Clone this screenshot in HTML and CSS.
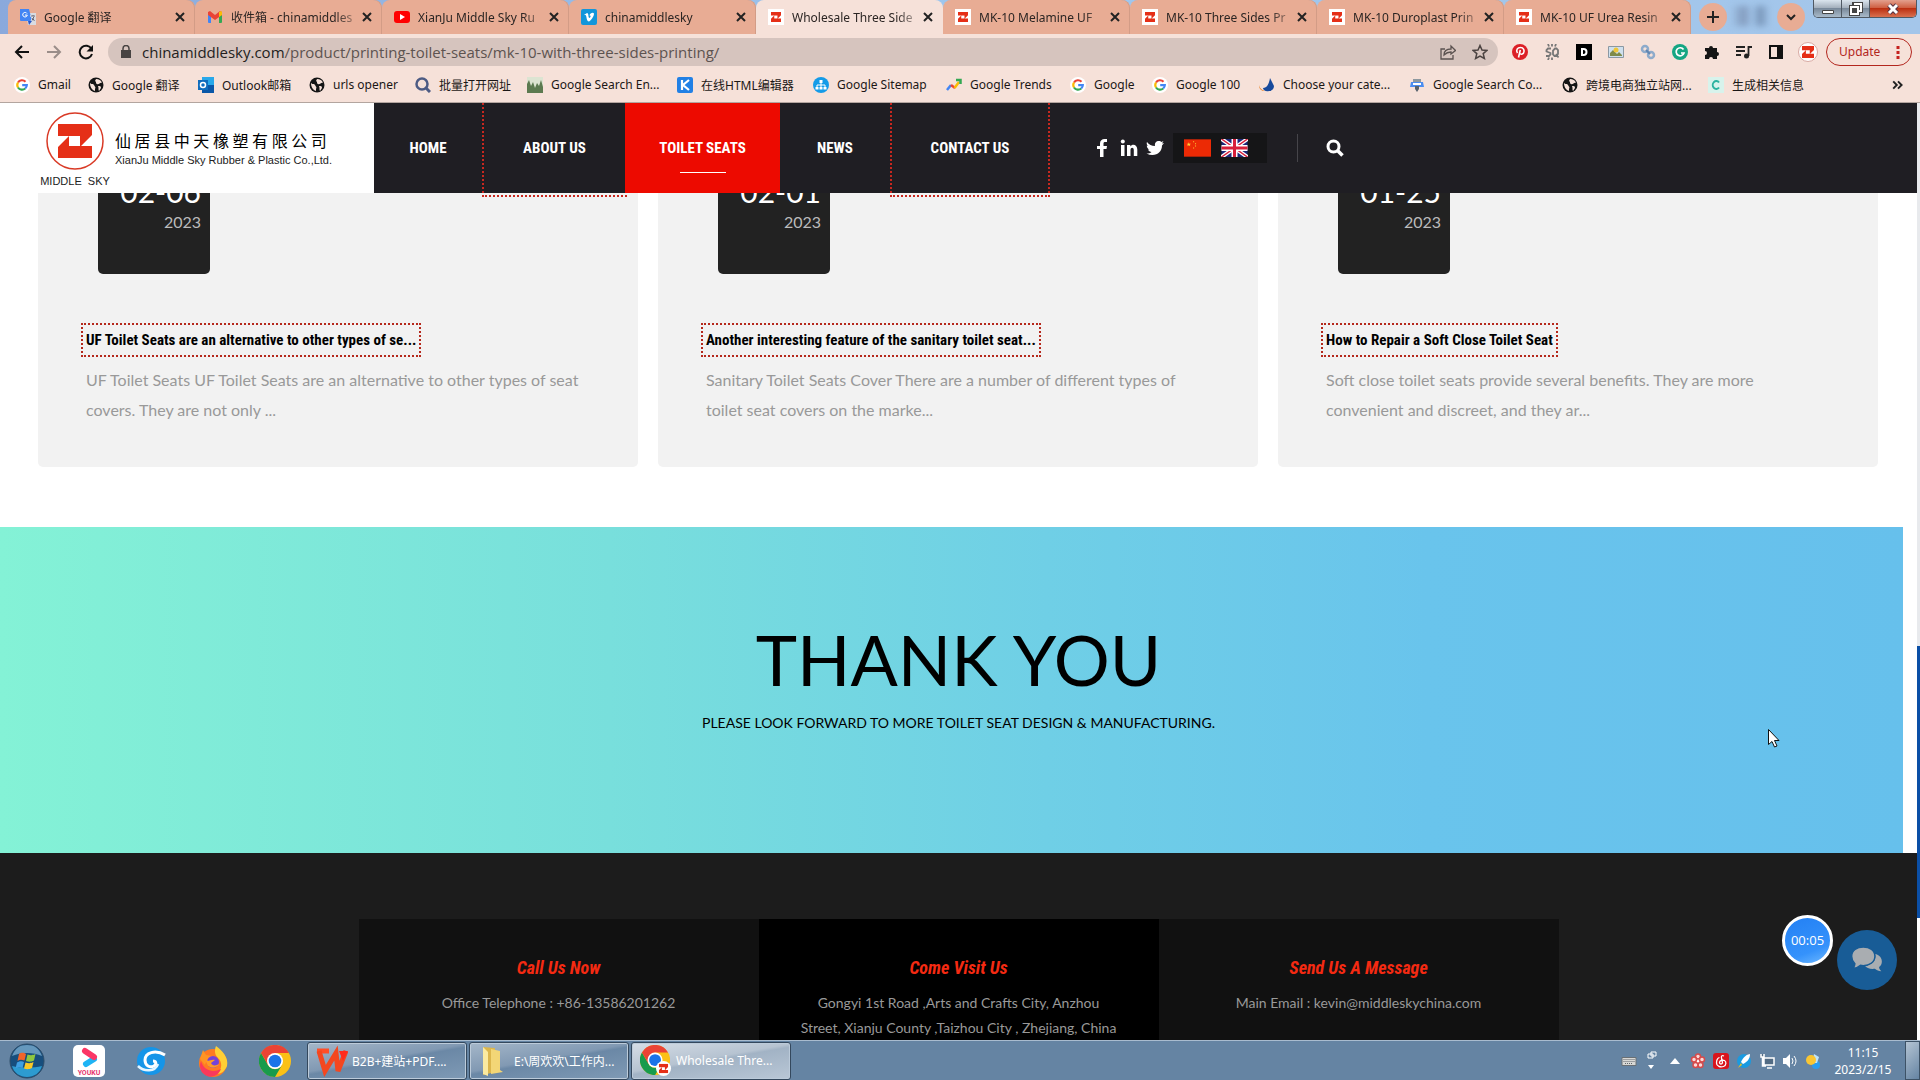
FILE: index.html
```html
<!DOCTYPE html>
<html lang="en">
<head>
    <meta charset="UTF-8">
    <meta name="viewport" content="width=device-width, initial-scale=1.0">
    <title>Wholesale Three Sides Printing</title>
    <link rel="stylesheet" href="styles.css">
</head>
<body>
    <!-- shared symbols -->
    <svg class="symbols" aria-hidden="true">
        <symbol id="z" viewBox="0 0 34 34"><path fill="#e52f17" d="M0 0h34v11L23 22h11v12H0V23l11-11H0z"/><path fill="#fff" d="M11 12h11v10H11z"/></symbol>
        <symbol id="zfav" viewBox="0 0 16 16"><path fill="#fff" d="M0 0h16v16H0z"/><use href="#z" x="3" y="3" width="10" height="10"/></symbol>
        <symbol id="close" viewBox="0 0 10 10"><path d="M1 1l8 8M9 1L1 9" stroke="#222" stroke-width="2"/></symbol>
        <symbol id="google" viewBox="0 0 16 16"><circle cx="8" cy="8" r="8" fill="#fff"/><g fill="none" stroke-width="2.2"><path stroke="#ea4335" d="M4 5.500A4.800 4.800 0 0 1 11.500 4.700"/><path stroke="#fbbc05" d="M4 5.500a4.800 4.800 0 0 0 0 5"/><path stroke="#34a853" d="M4 10.500a4.800 4.800 0 0 0 7.200 1"/><path stroke="#4285f4" d="M11.200 11.500A4.800 4.800 0 0 0 12.800 8.200H8.200"/></g></symbol>
        <symbol id="globe" viewBox="0 0 16 16"><circle cx="8" cy="8" r="7.500" fill="#151515"/><path fill="#f6e1d9" d="M2 6c2 2 3 0 4 2s2 2 1 4l0 2C4 13 2 10 2 6zM8 2c3 0 5 1 6 4-2-1-3 2-5 1S9 5 7 4zM10 9c2 0 3 0 3 2l-2 3c-1-1 0-3-1-5z"/></symbol>
        <symbol id="chrome" viewBox="0 0 32 32"><circle cx="16" cy="16" r="16" fill="#fbc116"/><path fill="#ea4335" d="M2.100 8A16 16 0 0 1 29.900 8H16a8 8 0 0 0-7 4z"/><path fill="#189b4c" d="M2.100 8A16 16 0 0 0 16 32l7-12a8 8 0 0 1-14 0z"/><path fill="#ea4335" d="M2.100 8l7 12L16 8z"/><circle cx="16" cy="16" r="8" fill="#fff"/><circle cx="16" cy="16" r="6.300" fill="#1a73e8"/></symbol>
    </svg>

    <!-- browser window -->
    <header class="browser">
        <div class="tab-strip">
            <div class="tab">
                <svg class="fav" viewBox="0 0 16 16"><path fill="#d9dce2" d="M6 4h10v12H8z"/><path fill="#4285f4" d="M0 0h9l3 12H1a1 1 0 0 1-1-1z"/><path fill="#2a56c6" d="M8 12h4l-3 4z"/><path d="M7 4.500a2.300 2.300 0 1 0 .3 1.600H5M10 7h5M12.500 6v1M14 7l-3 5M12 9l3 3" stroke="#fff" fill="none"/><path d="M11 7h4M13 6v1M14 7.500l-2 4M12.500 9l2 3" stroke="#667" fill="none"/></svg>
                <span class="tab-title">Google 翻译</span><button class="tab-close" aria-label="Close"><svg><use href="#close"/></svg></button>
            </div>
            <div class="tab">
                <svg class="fav" viewBox="0 0 16 16"><path fill="#4285f4" d="M1 4h3v10H2a1 1 0 0 1-1-1z"/><path fill="#34a853" d="M12 4h3v9a1 1 0 0 1-1 1h-2z"/><path fill="#ea4335" d="M1 3l2-1 5 4 5-4 2 1v3l-7 5-7-5z"/><path fill="#fbbc05" d="M12 3l2-1 1 1v3l-3 2z"/></svg>
                <span class="tab-title">收件箱 - chinamiddles</span><button class="tab-close" aria-label="Close"><svg><use href="#close"/></svg></button>
            </div>
            <div class="tab">
                <svg class="fav" viewBox="0 0 16 16"><rect y="2" width="16" height="12" rx="3" fill="#f00"/><path fill="#fff" d="M6 5l5 3-5 3z"/></svg>
                <span class="tab-title">XianJu Middle Sky Ru</span><button class="tab-close" aria-label="Close"><svg><use href="#close"/></svg></button>
            </div>
            <div class="tab">
                <svg class="fav" viewBox="0 0 16 16"><rect width="16" height="16" rx="2" fill="#1296db"/><path fill="#fff" d="M3 6l3-2c2 0 1 5 2.500 5C10 8 10 6 8.500 6.500 9 4 12 3 13 4.500c0 3-3 7-5 8-3 0-2-6-3.500-6.500z"/></svg>
                <span class="tab-title">chinamiddlesky</span><button class="tab-close" aria-label="Close"><svg><use href="#close"/></svg></button>
            </div>
            <div class="tab active">
                <svg class="fav"><use href="#zfav"/></svg>
                <span class="tab-title">Wholesale Three Side</span><button class="tab-close" aria-label="Close"><svg><use href="#close"/></svg></button>
            </div>
            <div class="tab">
                <svg class="fav"><use href="#zfav"/></svg>
                <span class="tab-title">MK-10 Melamine UF</span><button class="tab-close" aria-label="Close"><svg><use href="#close"/></svg></button>
            </div>
            <div class="tab">
                <svg class="fav"><use href="#zfav"/></svg>
                <span class="tab-title">MK-10 Three Sides Pr</span><button class="tab-close" aria-label="Close"><svg><use href="#close"/></svg></button>
            </div>
            <div class="tab">
                <svg class="fav"><use href="#zfav"/></svg>
                <span class="tab-title">MK-10 Duroplast Prin</span><button class="tab-close" aria-label="Close"><svg><use href="#close"/></svg></button>
            </div>
            <div class="tab">
                <svg class="fav"><use href="#zfav"/></svg>
                <span class="tab-title">MK-10 UF Urea Resin</span><button class="tab-close" aria-label="Close"><svg><use href="#close"/></svg></button>
            </div>
            <button class="round-button" aria-label="New tab"><svg viewBox="0 0 14 14"><path d="M7 1v12M1 7h12" stroke="#222" stroke-width="2"/></svg></button>
            <span class="glass-blur"></span>
            <button class="round-button" aria-label="Search tabs"><svg viewBox="0 0 14 14"><path d="M3 5l4 4 4-4" fill="none" stroke="#222" stroke-width="2"/></svg></button>
            <div class="window-controls">
                <button aria-label="Minimize"><svg viewBox="0 0 16 16"><path fill="#fff" stroke="#444" d="M2.500 9.500h11v3h-11z"/></svg></button>
                <button aria-label="Restore"><svg viewBox="0 0 16 16"><path fill="none" stroke="#444" stroke-width="4" d="M6 3h7v7H6zM3 6h7v7H3z"/><path fill="none" stroke="#fff" stroke-width="2" d="M6 3h7v7h-3M3 6h7v7H3z"/></svg></button>
                <button class="close-window" aria-label="Close window"><svg viewBox="0 0 16 16"><path d="M4 4l8 8M12 4l-8 8" stroke="#534" stroke-width="5"/><path d="M4 4l8 8M12 4l-8 8" stroke="#fff" stroke-width="3"/></svg></button>
            </div>
        </div>

        <div class="toolbar">
            <button class="tool" aria-label="Back"><svg viewBox="0 0 16 16"><path d="M15 8H2M8 2L2 8l6 6" fill="none" stroke="#111" stroke-width="2"/></svg></button>
            <button class="tool" aria-label="Forward"><svg viewBox="0 0 16 16"><path d="M1 8h13M8 2l6 6-6 6" fill="none" stroke="#9a8d89" stroke-width="2"/></svg></button>
            <button class="tool" aria-label="Reload"><svg viewBox="0 0 16 16"><path d="M13.500 5A6.300 6.300 0 1 0 14 10" fill="none" stroke="#111" stroke-width="2"/><path d="M15 1v6.500H8.500z" fill="#111"/></svg></button>
            <div class="omnibox">
                <svg class="lock" viewBox="0 0 12 14"><path fill="#484443" d="M1 5h10v8H1z"/><path d="M3 6V3.500a3 3 0 0 1 6 0V6" fill="none" stroke="#484443" stroke-width="1.500"/></svg>
                <div class="url"><b>chinamiddlesky.com</b>/product/printing-toilet-seats/mk-10-with-three-sides-printing/</div>
                <button class="tool" aria-label="Share"><svg viewBox="0 0 16 16"><path d="M5 5H1v10h12v-4M4 11c0-4 3-6 7-6V2l4.500 4.500L11 10V8C8 8 6 9 4 11z" fill="none" stroke="#5b5250" stroke-width="1.300"/></svg></button>
                <button class="tool" aria-label="Bookmark"><svg viewBox="0 0 16 16"><path d="M8 1.500l2 4.500 5 .4-3.800 3.200 1.200 4.900L8 12l-4.400 2.500 1.200-4.900L1 6.400 6 6z" fill="none" stroke="#4b4341" stroke-width="1.500"/></svg></button>
            </div>
            <div class="extensions">
                <button class="tool" aria-label="Pinterest"><svg viewBox="0 0 16 16"><circle cx="8" cy="8" r="8" fill="#dc1f26"/><path d="M5.500 9C3.500 6 5.500 3.500 8.500 3.500s4.500 3 3 5.500c-1 1.500-3 1.500-3.500.5M8.300 6L6.500 13.500" fill="none" stroke="#fff" stroke-width="1.600"/></svg></button>
                <button class="tool" aria-label="SEOquake"><svg viewBox="0 0 16 16"><path d="M7 4.500H4L2.500 6v1.500L6.500 9v1.500L5 12H2M12.500 4.500H11L9 6.500v4L10.500 12H12l2-2V6zM12 10l2.500 3.500M4 0l1 2.500M8 0v2.500M12 0l-1 2.500M4 16l1-2.500M8 16v-2.500" fill="none" stroke="#777" stroke-width="1.800"/></svg></button>
                <button class="tool" aria-label="Detailed"><svg viewBox="0 0 16 16"><path d="M0 0h16v16H0z"/><path d="M6 5v6h1.500c4 0 4-6 0-6z" fill="none" stroke="#fff" stroke-width="2"/></svg></button>
                <button class="tool" aria-label="Images"><svg viewBox="0 0 16 16"><path d="M.5 2.500h15v11H.5z" fill="#cfe0ee" stroke="#8b98a3"/><path d="M2 12V9l3-3 4 4 2-2 3 3v1z" fill="#7e8b4b"/><circle cx="8" cy="6" r="2.500" fill="#efc63a"/></svg></button>
                <button class="tool" aria-label="Links"><svg viewBox="0 0 16 16"><g fill="none" stroke="#8eabcb" stroke-width="2.500"><circle cx="5" cy="5" r="3"/><circle cx="11" cy="11" r="3"/></g><path d="M6 6l4 4" stroke="#5f84b0" stroke-width="2"/></svg></button>
                <button class="tool" aria-label="Grammarly"><svg viewBox="0 0 16 16"><circle cx="8" cy="8" r="8" fill="#15a683"/><path d="M11.500 5.500A4 4 0 1 0 12 9H9" fill="none" stroke="#fff" stroke-width="1.700"/></svg></button>
                <button class="tool" aria-label="Extensions"><svg viewBox="0 0 16 16"><path fill="#151515" d="M1 4h4a2 2 0 1 1 4 0h4v4a2 2 0 1 1 0 4v3H9a2 2 0 1 0-4 0H1v-4a2 2 0 1 0 0-4z"/></svg></button>
                <button class="tool" aria-label="Media"><svg viewBox="0 0 16 16"><path d="M0 3h9M0 7h9M0 11h5M12.500 12V3H16" stroke="#222" stroke-width="1.800" fill="none"/><circle cx="10.500" cy="12" r="2.500" fill="#222"/></svg></button>
                <button class="tool" aria-label="Side panel"><svg viewBox="0 0 16 16"><path d="M2 2h12v12H2z" fill="none" stroke="#111" stroke-width="2"/><path d="M9 2h5v12H9z" fill="#111"/></svg></button>
                <button class="tool" aria-label="Profile"><svg class="avatar" viewBox="0 0 20 20"><circle cx="10" cy="10" r="9.500" fill="#fff" stroke="#d8a9a2"/><use href="#z" x="4" y="4" width="12" height="12"/></svg></button>
            </div>
            <button class="update">Update<svg viewBox="0 0 4 16"><path fill="#c5221f" d="M.5 2h3v3h-3zM.5 7h3v3h-3zM.5 12h3v3h-3z"/></svg></button>
        </div>

        <nav class="bookmarks">
            <a href="#"><svg><use href="#google"/></svg>Gmail</a>
            <a href="#"><svg><use href="#globe"/></svg>Google 翻译</a>
            <a href="#"><svg viewBox="0 0 16 16"><path fill="#28a8ea" d="M4 0h12v15H4z"/><path fill="#0a57a8" d="M4 8h12v8H4z"/><path fill="#0f6cbd" d="M0 3h10v10H0z"/><circle cx="5" cy="8" r="2.500" fill="none" stroke="#fff" stroke-width="1.500"/></svg>Outlook邮箱</a>
            <a href="#"><svg><use href="#globe"/></svg>urls opener</a>
            <a href="#"><svg viewBox="0 0 16 16"><circle cx="7" cy="7" r="5.500" fill="none" stroke="#4d5b84" stroke-width="2.500"/><path d="M11 11l4 4" stroke="#4d5b84" stroke-width="3"/></svg>批量打开网址</a>
            <a href="#"><svg viewBox="0 0 16 16"><path fill="#dce4d2" d="M0 0h16v16H0z"/><path fill="#5c7a50" d="M0 7l2-4 2 6 2-4 2 6 2-5 2 3 2-6 2 7v6H0z"/></svg>Google Search En...</a>
            <a href="#"><svg viewBox="0 0 16 16"><rect width="16" height="16" rx="2" fill="#2180e5"/><path d="M5 3v10M12 3L6 8l6 5" fill="none" stroke="#fff" stroke-width="2.200"/></svg>在线HTML编辑器</a>
            <a href="#"><svg viewBox="0 0 16 16"><circle cx="8" cy="8" r="8" fill="#149be8"/><path d="M8 5v3M4 11V8h8v3M8 8v3" stroke="#fff" fill="none"/><path fill="#fff" d="M6.500 3h3v3h-3zM2.500 10h3v2.500h-3zM6.500 10h3v2.500h-3zM10.500 10h3v2.500h-3z"/></svg>Google Sitemap</a>
            <a href="#"><svg viewBox="0 0 16 16"><g fill="none" stroke-width="2.500"><path stroke="#4285f4" d="M1 13l4-5"/><path stroke="#ea4335" d="M5 8l4 3"/><path stroke="#fbbc05" d="M8.500 11L13 5"/><path stroke="#34a853" d="M10 3h4.500v4"/></g></svg>Google Trends</a>
            <a href="#"><svg><use href="#google"/></svg>Google</a>
            <a href="#"><svg><use href="#google"/></svg>Google 100</a>
            <a href="#"><svg viewBox="0 0 16 16"><path fill="#e98024" d="M0 8c1 4 4 6 8 6H4C1 13 0 11 0 8z"/><path fill="#174a9c" d="M11 1l4 8c0 3-2 5-5 5-3 1-6-1-6-3 4 0 6-4 7-10z"/></svg>Choose your cate...</a>
            <a href="#"><svg viewBox="0 0 16 16"><path fill="#8d989f" d="M4 2h8v3H4z"/><path fill="#4b8df0" d="M2 5h12l1 5H1z"/><path fill="#fff" d="M4 6h8v2H4z"/><path fill="#56616d" d="M6 9h4v3l-2 3-2-3z"/></svg>Google Search Co...</a>
            <a href="#"><svg><use href="#globe"/></svg>跨境电商独立站网...</a>
            <a href="#"><svg viewBox="0 0 16 16"><path fill="#d8f3ec" d="M0 0h16v16H0z"/><path d="M11 5.500a3.500 4 0 1 0 0 5" fill="none" stroke="#2bb3a0" stroke-width="2"/></svg>生成相关信息</a>
            <button class="more" aria-label="More bookmarks"><svg viewBox="0 0 10 10"><path d="M1 2l3 3-3 3M5 2l3 3-3 3" fill="none" stroke="#222" stroke-width="1.600"/></svg></button>
        </nav>
    </header>

    <!-- web page -->
    <div class="viewport">
        <div class="page">
            <header class="site-header">
                <a class="logo" href="#">
                    <span class="logo-mark">
                        <svg viewBox="0 0 58 58"><circle cx="29" cy="29" r="28" fill="#fff" stroke="#d93a26" stroke-width="1.500"/><use href="#z" x="12" y="12" width="34" height="34"/></svg>
                        MIDDLE&nbsp; SKY
                    </span>
                    <span class="logo-text">
                        <span class="logo-cn">仙 居 县 中 天 橡 塑 有 限 公 司</span>
                        <span class="logo-en">XianJu Middle Sky Rubber &amp; Plastic Co.,Ltd.</span>
                    </span>
                </a>
                <nav class="main-nav">
                    <a href="#">HOME</a>
                    <a href="#" class="marked">ABOUT US</a>
                    <a href="#" class="current">TOILET SEATS</a>
                    <a href="#">NEWS</a>
                    <a href="#" class="marked">CONTACT US</a>
                </nav>
                <div class="social">
                    <a href="#" aria-label="Facebook"><svg viewBox="0 0 16 18"><path fill="#fff" d="M5 18v-8H2V7h3V4.500C5 1.500 7 0 9.500 0H12v3h-2C9 3 8.500 3.500 8.500 4.500V7H12l-.5 3h-3v8z"/></svg></a>
                    <a href="#" aria-label="LinkedIn"><svg viewBox="0 0 18 18"><path fill="#fff" d="M1 6h3.500v11H1zM7 6h3.300v1.500c2-3 7-2 7 3V17h-3.500v-6c0-3-3.300-3-3.300 0v6H7z"/><circle cx="2.800" cy="2.500" r="2" fill="#fff"/></svg></a>
                    <a href="#" aria-label="Twitter"><svg viewBox="0 0 18 18"><path fill="#fff" d="M1 3c2 2.500 4.500 4 8 4-.5-3 1-5 4-5 1 0 2 .5 2.500 1l2-1-1.500 2.500L18 4l-2 2.500C16 12 12 16 6.500 16c-2 0-4-.5-6-1.500 2 0 4-.5 5-1.500-1.500 0-3-1-3.500-2.500h1.500C2 10 .8 8.500.8 6.500L2.300 7C.8 6 .3 4.500 1 3z"/></svg></a>
                </div>
                <div class="languages">
                    <a href="#" aria-label="中文"><svg class="flag" viewBox="0 0 28 18"><path fill="#ec2a05" d="M0 0h28v18H0z"/><path fill="#ffd23a" d="M5 3l.6 1.500h1.600L6 5.500l.5 1.600L5 6.200l-1.500.9L4 5.500 2.800 4.500h1.600zM9.500 2h1v1h-1zM11.500 4h1v1h-1zM11.500 6.500h1v1h-1zM9.500 8.500h1v1h-1z"/></svg></a>
                    <a href="#" aria-label="English"><svg class="flag" viewBox="0 0 26 18"><path fill="#1c2878" d="M0 0h26v18H0z"/><path d="M0 0l26 18M26 0L0 18" stroke="#fff" stroke-width="4"/><path d="M0 0l26 18M26 0L0 18" stroke="#d8203b" stroke-width="1.500"/><path d="M13 0v18M0 9h26" stroke="#fff" stroke-width="6"/><path d="M13 0v18M0 9h26" stroke="#d8203b" stroke-width="3"/></svg></a>
                </div>
                <button class="search" aria-label="Search"><svg viewBox="0 0 18 18"><circle cx="7.500" cy="7.500" r="5.500" fill="none" stroke="#fff" stroke-width="3"/><path d="M11.500 11.500L16.500 16.500" stroke="#fff" stroke-width="3.500"/></svg></button>
            </header>

            <section class="news">
                <article class="card">
                    <div class="date"><strong>02-06</strong>2023</div>
                    <h3><a href="#">UF Toilet Seats are an alternative to other types of se...</a></h3>
                    <p>UF Toilet Seats UF Toilet Seats are an alternative to other types of seat covers. They are not only ...</p>
                </article>
                <article class="card">
                    <div class="date"><strong>02-01</strong>2023</div>
                    <h3><a href="#">Another interesting feature of the sanitary toilet seat...</a></h3>
                    <p>Sanitary Toilet Seats Cover There are a number of different types of toilet seat covers on the marke...</p>
                </article>
                <article class="card">
                    <div class="date"><strong>01-25</strong>2023</div>
                    <h3><a href="#">How to Repair a Soft Close Toilet Seat</a></h3>
                    <p>Soft close toilet seats provide several benefits. They are more convenient and discreet, and they ar...</p>
                </article>
            </section>

            <section class="banner">
                <h2>THANK YOU</h2>
                <p>PLEASE LOOK FORWARD TO MORE TOILET SEAT DESIGN &amp; MANUFACTURING.</p>
            </section>

            <footer class="footer">
                <div class="contacts">
                    <div class="contact">
                        <h4>Call Us Now</h4>
                        <p>Office Telephone : +86-13586201262</p>
                    </div>
                    <div class="contact dark">
                        <h4>Come Visit Us</h4>
                        <p>Gongyi 1st Road ,Arts and Crafts City, Anzhou Street, Xianju County ,Taizhou City , Zhejiang, China</p>
                    </div>
                    <div class="contact">
                        <h4>Send Us A Message</h4>
                        <p>Main Email : kevin@middleskychina.com</p>
                    </div>
                </div>
            </footer>
        </div>
        <div class="screen-edge"></div>

        <div class="timer">00:05</div>
        <button class="chat" aria-label="Chat"><svg viewBox="0 0 32 28"><path fill="#a9adb1" d="M22 7c6 0 10 4 10 8.500 0 3-1 4.500-3 6 0 2 1 3 2.500 4.500-3 0-5-1-7-2.500-5 .5-9-.5-11-3.500C21 20 26 15 25 8z"/><path fill="#a9adb1" stroke="#185c96" stroke-width="1.500" d="M12 0c7 0 12.500 4 12.500 10S19 20 12 20l-3-.3C7 21.500 4 23 1 23c1-1.500 2-3 2-5-2-2-3.500-4.500-3.500-8C-.5 4 5 0 12 0z"/></svg></button>
        <svg class="cursor" viewBox="0 0 12 19"><path fill="#fff" stroke="#111" d="M.5.5v15L4 12.500 6.500 18l2.500-1-2.500-5.500H11z"/></svg>
    </div>

    <!-- taskbar -->
    <footer class="taskbar">
        <div class="launchers">
            <button aria-label="Start"><svg viewBox="0 0 36 36"><circle cx="18" cy="18" r="17" fill="#174e7d" stroke="#2d4d69"/><path fill="#2d9bd0" d="M3 23c8 2 22 2 30 0-2 7-8 11-15 11S5 30 3 23z"/><path fill="#87b8d9" d="M3 13C6 5 11 2 18 2s12 3 15 11c-9-4-21-4-30 0z" opacity=".7"/><path fill="#f0642a" d="M10 11c3-2 5-1 7 0l-1.500 6.500c-3-1-5-1-7 .5z"/><path fill="#8fc740" d="M18.500 11.500c3 1 5 1 8-.5L25 17.500c-3 1.500-5 1.500-8 .5z"/><path fill="#3fa0e2" d="M8 19.500c3-1.500 5-1.500 7-.5L13.500 25c-3-1-5-1-7 .5z"/><path fill="#fcc926" d="M16.500 19.500c3 1 5 1 8-.5L23 25c-3 1.500-5 1.500-8 .5z"/></svg></button>
            <button aria-label="Youku"><svg viewBox="0 0 32 32"><rect width="32" height="32" rx="5" fill="#fff"/><path d="M13 19l8-5" stroke="#1eb4f5" stroke-width="6" stroke-linecap="round"/><path d="M12 6l9 6" stroke="#fb3666" stroke-width="6" stroke-linecap="round"/><text x="16" y="30" text-anchor="middle">YOUKU</text></svg></button>
            <button aria-label="Sogou"><svg viewBox="0 0 32 32"><circle cx="16" cy="16" r="14" fill="#1595e8"/><path d="M30 10C20 4 10 8 10 15c0 6 5 8 9 6 3-2 2-5-1-5" fill="none" stroke="#fff" stroke-width="3"/><path d="M3 21c6 6 17 6 20-2" fill="none" stroke="#e4f5ff" stroke-width="2.500"/></svg></button>
            <button aria-label="Firefox"><svg viewBox="0 0 32 32"><circle cx="16" cy="18" r="14" fill="#ff7a22"/><path fill="#ffcf35" d="M19 1c6 4 13 12 11 20-2 5-6 8-10 8 6-6 5-12 1-16-3-3-4-7-2-12z"/><path fill="#fb395b" d="M4 16c3 10 12 12 20 8-3 8-12 10-17 5-4-3-5-8-3-13z"/><path fill="#ff9424" d="M3 14l3-9 3 5 6 1-2 5c-3 0-5 2-5 4z"/><circle cx="16" cy="17" r="6" fill="#7543d7"/><path fill="#ff9b25" d="M9 15c3 2 5-1 9 0l-4 3c1 3 5 3 8 1-2 5-10 5-12 0z"/></svg></button>
            <button aria-label="Chrome"><svg><use href="#chrome"/></svg></button>
        </div>
        <div class="windows">
            <button class="window"><svg viewBox="0 0 32 32"><path d="M1 6h12" stroke="#ff4e28" stroke-width="5"/><path d="M3 6l6 20L20 8l2 18L30 6" fill="none" stroke="#f4471f" stroke-width="5"/><path d="M23 6h9l-5 10" fill="#ff2b1c"/></svg><span>B2B+建站+PDF....</span></button>
            <button class="window folder"><svg viewBox="0 0 32 32"><path fill="#dcb64c" d="M5 2l12 1v24L5 30z"/><path fill="#fbeaa0" d="M5 2l5 5v24l-5-2z"/><path fill="#f3d676" d="M13 4l9 2v19l3 2-12 2z"/></svg><span>E:\周欢欢\工作内...</span></button>
            <button class="window current"><svg viewBox="0 0 34 34"><use href="#chrome" width="32" height="32"/><circle cx="25" cy="25" r="8" fill="#fff"/><use href="#z" x="20" y="20" width="10" height="10"/></svg><span>Wholesale Thre...</span></button>
        </div>
        <div class="tray">
            <svg viewBox="0 0 16 16"><path fill="#d8d8d5" stroke="#6a7075" d="M1 4.500h14v8H1z"/><path d="M2.500 6.500h11M2.500 8.500h11M4 10.500h8" stroke="#60656a" stroke-dasharray="1 1"/></svg>
            <svg class="tall" viewBox="0 0 16 24"><path d="M7 3h5v4H7zM4 5h5v4H4z" fill="#6584a3" stroke="#fff"/><path fill="#fff" d="M4 16h6l-3 4z"/></svg>
            <svg viewBox="0 0 16 16"><path fill="#fff" d="M3 11l5-6 5 6z"/></svg>
            <svg viewBox="0 0 16 16"><g fill="none" stroke="#d74b4b" stroke-width="1.500"><circle cx="8" cy="8" r="3" fill="#fff"/><circle cx="8" cy="3.500" r="2.500" fill="#fbdada"/><circle cx="12" cy="6.500" r="2.500" fill="#fbdada"/><circle cx="10.500" cy="12" r="2.500" fill="#fbdada"/><circle cx="5.500" cy="12" r="2.500" fill="#fbdada"/><circle cx="4" cy="6.500" r="2.500" fill="#fbdada"/></g></svg>
            <svg viewBox="0 0 16 16"><rect width="16" height="16" rx="3" fill="#d9141c"/><path d="M11 3c-2-1-3 0-2.500 2l1 4.500c0 2-3 2-3 0s3-3 5-2 2 5-1 6-7 0-7-3.500S5 5 6.500 4.500" fill="none" stroke="#fff" stroke-width="1.300"/></svg>
            <svg viewBox="0 0 16 16"><circle cx="8" cy="8" r="7" fill="#1a9ae0"/><path fill="#fff" d="M14 1c-5 1-7 4-9 8l2 2c4-2 7-5 7-10z"/><path fill="#e8bf24" d="M5 10l1 2-4 3z"/></svg>
            <svg viewBox="0 0 16 16"><path fill="#536c84" stroke="#fff" stroke-width="1.500" d="M5 5h10v7H5zM8 15h5M2 1v3h3V1M3.500 4v9H7"/></svg>
            <svg viewBox="0 0 16 16"><path fill="#fff" d="M1 5h3l4-4v14l-4-4H1z"/><path d="M10 5q2 3 0 6M12 3q4 5 0 10" fill="none" stroke="#fff"/></svg>
            <svg viewBox="0 0 16 16"><circle cx="11" cy="12" r="4" fill="#2a9df0"/><path fill="#bde3fb" d="M9 1l5 3-2 6H7z"/><circle cx="6" cy="7" r="5" fill="#f9c633"/></svg>
        </div>
        <div class="clock">11:15<br>2023/2/15</div>
        <button class="show-desktop" aria-label="Show desktop"></button>
    </footer>
</body>
</html>
```
FILE: styles.css
```css
* {
    box-sizing: border-box;
}

body {
    margin: 0;
    height: 100vh;
    display: flex;
    flex-direction: column;
    overflow: hidden;
    font-family: Lato, "Noto Sans CJK SC", sans-serif;
    background: #fff;
}

h2, h3, h4, p {
    margin: 0;
}

a {
    color: inherit;
    text-decoration: none;
}

button {
    padding: 0;
    border: none;
    background: none;
    font: inherit;
    color: inherit;
}

svg {
    display: block;
    flex: none;
    width: 16px;
    height: 16px;
}

.symbols {
    position: absolute;
    width: 0;
    height: 0;
}

/* === Browser === */
.browser {
    flex: none;
    background: #f6e1d9;
    border-bottom: 1px solid #b3a59f;
    font-family: "Noto Sans", "Noto Sans CJK SC", sans-serif;
    font-size: 12px;
    color: #2b2523;
}

.tab-strip {
    display: flex;
    height: 34px;
    padding: 0 3px 0 8px;
    background: linear-gradient(90deg, #8aa9dc, #9ec6ee 50%, #a4c6ea);
}

.tab {
    display: flex;
    align-items: center;
    flex: 0 1 187px;
    min-width: 0;
    padding: 0 10px 0 12px;
    border-radius: 8px 8px 0 0;
    background: #e8ac94;
    box-shadow: inset -1px 0 #d39c86;
}

.tab.active {
    background: #f6e1d9;
    box-shadow: none;
}

.tab-title {
    flex: 1;
    margin: 0 4px 0 8px;
    white-space: nowrap;
    -webkit-mask-image: linear-gradient(90deg, #000 82%, transparent 105%);
    mask-image: linear-gradient(90deg, #000 82%, transparent 105%);
}

.tab-close svg {
    width: 10px;
    height: 10px;
}

.round-button {
    display: flex;
    align-items: center;
    justify-content: center;
    width: 28px;
    height: 28px;
    margin: 3px 0 0 8px;
    border-radius: 50%;
    background: #e8ac94;
}

.round-button svg {
    width: 14px;
    height: 14px;
}

.glass-blur {
    width: 42px;
    height: 20px;
    margin-top: 6px;
    background: linear-gradient(90deg, transparent 10%, #8199bb 40%, transparent 60%, #7592b5 80%, transparent);
    filter: blur(3px);
}

.window-controls {
    display: flex;
    height: 18px;
    margin-left: auto;
    border: 1px solid #4f5964;
    border-top: none;
    border-radius: 0 0 5px 5px;
    overflow: hidden;
}

.window-controls button {
    display: flex;
    align-items: center;
    justify-content: center;
    width: 28px;
    border-right: 1px solid #4f5964;
    background: linear-gradient(#dbe5ee, #9fabb8 50%, #79899a 50%, #a9bac9);
}

.window-controls .close-window {
    width: 46px;
    border: none;
    background: linear-gradient(#e3a08e, #cf6043 45%, #bc3012 50%, #d97050);
}

.toolbar {
    display: flex;
    align-items: center;
    height: 35px;
    padding: 0 8px 0 6px;
}

.tool {
    display: flex;
    align-items: center;
    justify-content: center;
    flex: none;
    width: 32px;
    height: 28px;
}

.tool .avatar {
    width: 20px;
    height: 20px;
}

.omnibox {
    display: flex;
    align-items: center;
    flex: 1;
    height: 28px;
    margin: 0 6px;
    padding: 0 2px 0 12px;
    border-radius: 14px;
    background: #d6c4be;
}

.lock {
    width: 12px;
    height: 14px;
}

.url {
    flex: 1;
    margin-left: 10px;
    font-family: "Open Sans", sans-serif;
    font-size: 15px;
    color: #5d5350;
}

.url b {
    font-weight: 400;
    color: #231e1d;
}

.extensions {
    display: flex;
}

.update {
    display: flex;
    align-items: center;
    justify-content: space-between;
    width: 86px;
    height: 28px;
    margin-left: 2px;
    padding: 0 11px 0 12px;
    border: 1px solid #b3261e;
    border-radius: 14px;
    color: #b3261e;
}

.update svg {
    width: 4px;
}

.bookmarks {
    display: grid;
    grid-template-columns: 74px 110px 111px 106px 112px 150px 136px 133px 124px 82px 107px 150px 153px 146px 105px 1fr;
    align-items: center;
    height: 33px;
    padding: 0 16px 2px 14px;
    color: #1b1716;
}

.bookmarks a {
    display: flex;
    align-items: center;
    gap: 8px;
    white-space: nowrap;
}

.more {
    justify-self: end;
}

.more svg {
    width: 12px;
    height: 12px;
}

/* === Page === */
.viewport {
    position: relative;
    display: flex;
    flex: 1;
    min-height: 0;
    overflow: hidden;
}

.page {
    display: flex;
    flex-direction: column;
    flex: 1;
    min-width: 0;
}

.screen-edge {
    width: 3px;
    background: linear-gradient(#e8eaed 58%, #0b4fa6 58%, #0b4fa6 87%, #fff 87%);
}

.site-header {
    position: relative;
    z-index: 2;
    display: flex;
    align-items: center;
    flex: none;
    height: 90px;
    background: #1f1e23;
    color: #fff;
}

.logo {
    display: flex;
    align-self: stretch;
    width: 374px;
    padding: 9px 0 0 38px;
    background: #fff;
    color: #222;
    font-family: "Liberation Sans", "Noto Sans CJK SC", sans-serif;
    font-size: 11px;
}

.logo-mark {
    width: 74px;
    text-align: center;
    white-space: nowrap;
}

.logo-mark svg {
    width: 58px;
    height: 58px;
    margin: 0 auto 5px;
}

.logo-text {
    display: flex;
    flex-direction: column;
    gap: 2px;
    padding: 16px 0 0 3px;
    white-space: nowrap;
}

.logo-cn {
    font-family: "Noto Sans CJK SC", sans-serif;
    font-size: 16px;
    line-height: 24px;
    color: #000;
}

.main-nav {
    display: grid;
    grid-template-columns: 108px 143px 155px 110px 158px;
    grid-template-rows: 90px;
    height: 90px;
}

.main-nav a {
    position: relative;
    display: flex;
    align-items: center;
    justify-content: center;
    font-family: "Roboto Condensed", Roboto, sans-serif;
    font-size: 15px;
    font-weight: 700;
    white-space: nowrap;
}

.main-nav .marked {
    height: 94px;
    padding-bottom: 2px;
    margin-right: -2px;
    border: 2px dotted #c8281f;
    border-top: none;
}

.main-nav .current {
    background: #ed0a00;
}

.main-nav .current::after {
    content: "";
    position: absolute;
    bottom: 20px;
    left: 55px;
    width: 46px;
    height: 1px;
    background: #fff;
}

.social {
    display: flex;
    gap: 8px;
    margin-left: 46px;
}

.social svg {
    width: 18px;
    height: 18px;
}

.languages {
    display: flex;
    align-items: center;
    gap: 10px;
    width: 94px;
    height: 30px;
    margin-left: 9px;
    padding-left: 11px;
    background: #151517;
}

.flag {
    width: 27px;
    height: 18px;
}

.search {
    margin-left: 30px;
    padding: 5px 0 5px 28px;
    border-left: 1px solid #46454a;
}

.search svg {
    width: 18px;
    height: 18px;
}

/* cards are scrolled partly under the header */
.news {
    display: grid;
    grid-template-columns: repeat(3, 1fr);
    gap: 20px;
    flex: none;
    margin-top: -20px;
    padding: 0 39px 60px 38px;
}

.card {
    padding: 0 48px 42px;
    border-radius: 5px;
    background: #f2f2f2;
}

.date {
    width: 112px;
    height: 101px;
    margin-left: 12px;
    padding-right: 9px;
    border-radius: 0 0 5px 5px;
    background: #222;
    color: #bbb;
    font-size: 16px;
    line-height: 26px;
    text-align: right;
}

.date strong {
    display: block;
    font-size: 30px;
    font-weight: 400;
    line-height: 36px;
    color: #fff;
}

.card h3 {
    margin: 49px 0 8px -5px;
    font-family: "Roboto Condensed", Roboto, sans-serif;
    font-size: 15px;
    line-height: 30px;
    white-space: nowrap;
    color: #000;
}

.card h3 a {
    display: inline-block;
    padding: 0 3px;
    border: 2px dotted #b5281c;
}

.card p {
    font-size: 16px;
    line-height: 30px;
    color: #999;
}

.banner {
    flex: none;
    height: 326px;
    margin-right: 14px;
    padding: 90px 0 0 14px;
    background: linear-gradient(90deg, #84f2d6, #78dfdc 32%, #6fcfe6 55%, #69c4ec 75%, #66c0ec);
    color: #000;
    text-align: center;
}

.banner h2 {
    font-size: 70px;
    font-weight: 400;
    line-height: 84px;
}

.banner p {
    margin-top: 10px;
    font-size: 14px;
    line-height: 24px;
}

.footer {
    flex: 1;
    min-height: 0;
    padding: 66px 0 0;
    background: #1c1c1c;
}

.contacts {
    display: grid;
    grid-template-columns: repeat(3, 1fr);
    width: 1200px;
    max-width: 100%;
    height: 100%;
    margin: 0 auto;
}

.contact {
    padding: 36px 40px 0;
    background: #111;
    color: #999;
    text-align: center;
}

.contact.dark {
    background: #000;
}

.contact h4 {
    font-family: "Roboto Condensed", Roboto, sans-serif;
    font-size: 18px;
    font-style: italic;
    line-height: 26px;
    color: #f52a12;
}

.contact p {
    margin-top: 9px;
    font-size: 14px;
    line-height: 25px;
}

.timer {
    position: absolute;
    right: 87px;
    bottom: 74px;
    z-index: 3;
    width: 51px;
    height: 51px;
    border: 3px solid #fff;
    border-radius: 50%;
    background: linear-gradient(160deg, #2380f4, #3592fb 70%, #6db8ff);
    color: #fff;
    font-family: "Open Sans", sans-serif;
    font-size: 13px;
    line-height: 45px;
    text-align: center;
}

.chat {
    position: absolute;
    right: 23px;
    bottom: 50px;
    z-index: 3;
    display: flex;
    align-items: center;
    justify-content: center;
    width: 60px;
    height: 60px;
    border-radius: 50%;
    background: #185c96;
}

.chat svg {
    width: 32px;
    height: 26px;
}

.cursor {
    position: absolute;
    right: 140px;
    bottom: 292px;
    z-index: 3;
    width: 12px;
    height: 19px;
}

/* === Taskbar === */
.taskbar {
    display: flex;
    align-items: center;
    flex: none;
    height: 40px;
    border-top: 1px solid #a9bccf;
    background: #6584a3;
    color: #fff;
    font-family: "Noto Sans", "Noto Sans CJK SC", sans-serif;
    font-size: 12px;
}

.launchers {
    display: flex;
    width: 307px;
    padding-left: 9px;
    gap: 26px;
}

.launchers button {
    width: 36px;
}

.launchers svg {
    width: 32px;
    height: 32px;
    margin: 2px;
}

.launchers button:first-child svg {
    width: 36px;
    height: 36px;
    margin: 0;
}

.launchers text {
    font-family: Roboto, sans-serif;
    font-size: 7px;
    font-weight: 700;
    fill: #e8356e;
}

.windows {
    display: flex;
    flex: 1;
    gap: 2px;
}

.window {
    display: flex;
    align-items: center;
    gap: 4px;
    width: 160px;
    height: 38px;
    padding-left: 8px;
    border: 1px solid #34485d;
    border-radius: 3px;
    box-shadow: inset 0 0 0 1px #bccbda;
    background: linear-gradient(170deg, #a5b7c9, #8199b3 45%, #6b88a6 50%, #7f9ab5);
    white-space: nowrap;
}

.window svg {
    width: 32px;
    height: 32px;
}

.window.current {
    background: linear-gradient(170deg, #d5dde6, #b6c3d1 45%, #a2b3c5 50%, #b9c7d6);
}

.tray {
    display: flex;
    align-items: center;
    gap: 7px;
}

.tray svg {
    width: 16px;
    height: 18px;
}

.tray .tall {
    height: 24px;
}

.clock {
    width: 84px;
    line-height: 17px;
    text-align: center;
}

.show-desktop {
    align-self: stretch;
    width: 15px;
    border: 1px solid #3d5266;
    background: linear-gradient(135deg, #b4c4d3, #6584a3);
}
```
